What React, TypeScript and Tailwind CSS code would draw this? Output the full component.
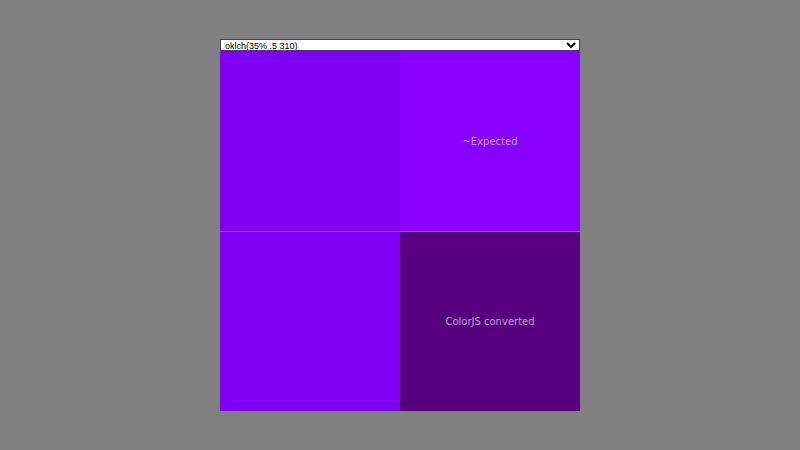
import React from 'react';

export default function App() {
  return (
    <div className="w-[800px] h-[450px] bg-[#808080] flex justify-center pt-[39px]">
      <div className="w-[360px] flex flex-col">
        <select className="h-[12px] w-full bg-white text-black text-[9px] leading-none border border-[#444] font-['Liberation_Sans',sans-serif] p-0 appearance-auto">
          <option>oklch(35% .5 310)</option>
        </select>
        <div className="grid grid-cols-2 font-['DejaVu_Sans',sans-serif] text-[10px] text-[#c0a3d4]">
          <div className="h-[180px] bg-[#8000f2]" />
          <div className="h-[180px] bg-[#8800ff] flex items-center justify-center pt-[1px]">~Expected</div>
          <div className="h-[180px] bg-[#8000f6] border-t border-[#9350f0]" />
          <div className="h-[180px] bg-[#56007e] border-t border-[#9350f0] flex items-center justify-center">ColorJS converted</div>
        </div>
      </div>
    </div>
  );
}
